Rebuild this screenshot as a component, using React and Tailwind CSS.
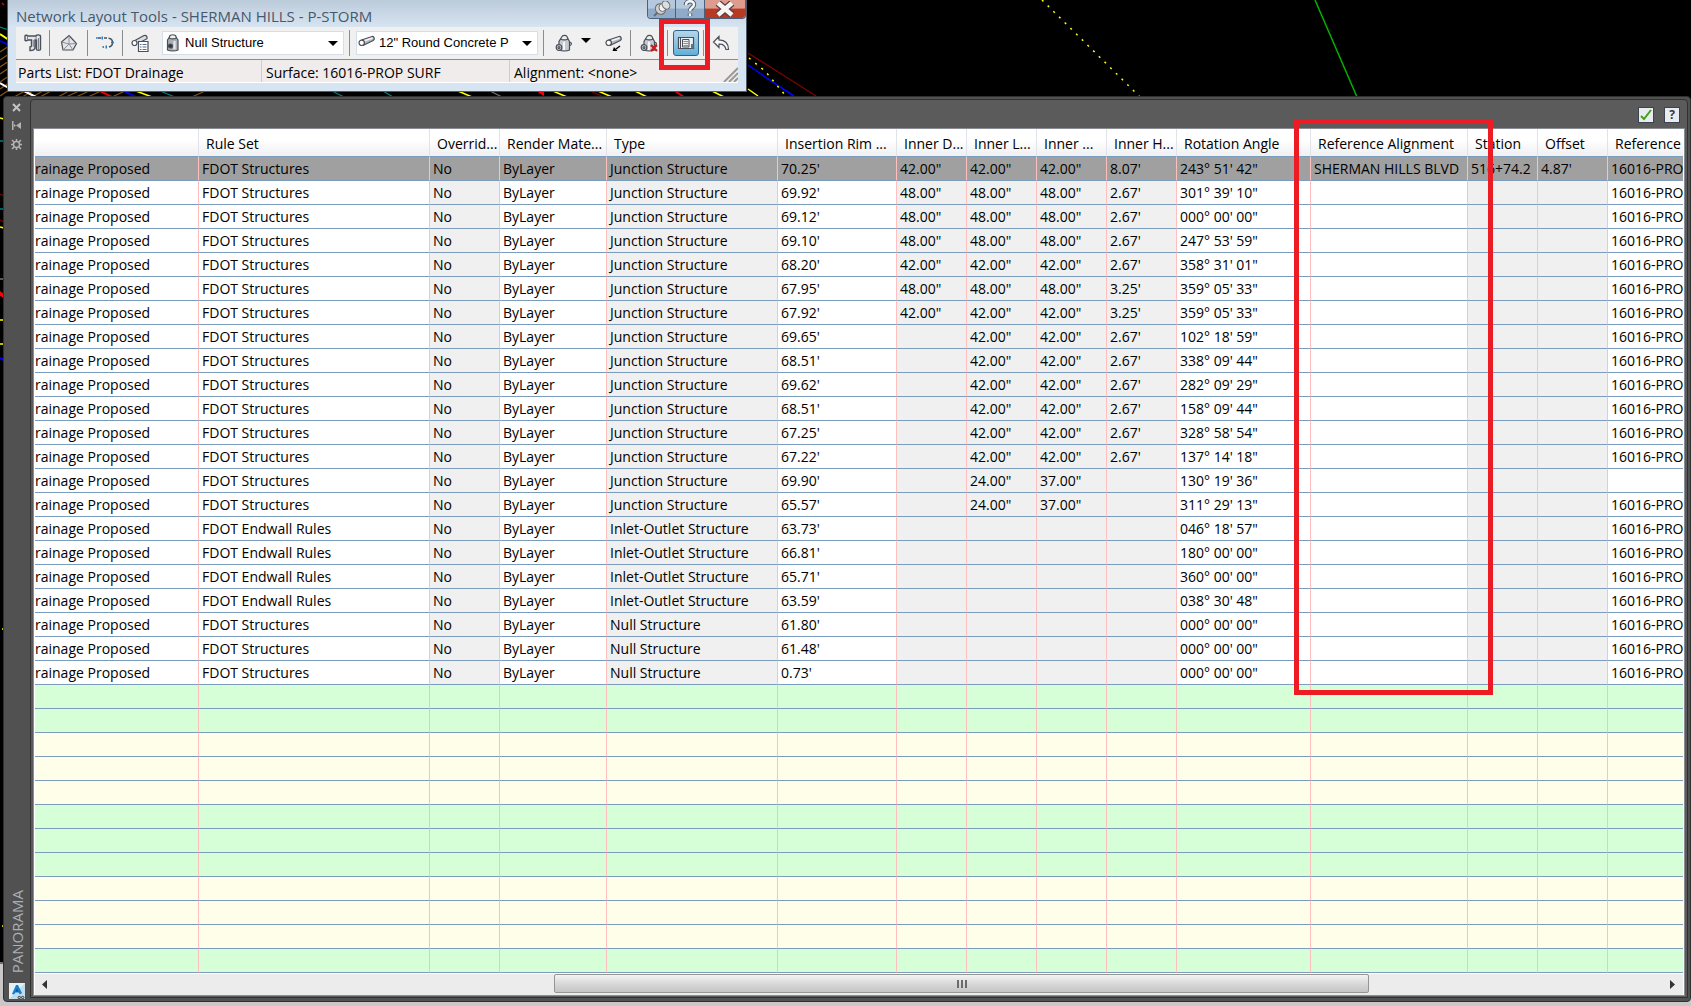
import { useState } from "react";

const columns = [
  { key: "style", title: "", width: "w-[164px]" },
  { key: "rules", title: "Rule Set", width: "w-[231px]" },
  { key: "override", title: "Overrid...", width: "w-[70px]", locked: true },
  { key: "render", title: "Render Mate...", width: "w-[107px]" },
  { key: "type", title: "Type", width: "w-[171px]", locked: true },
  { key: "rim", title: "Insertion Rim ...", width: "w-[119px]" },
  { key: "innerD", title: "Inner D...", width: "w-[70px]", locked: true },
  { key: "innerL", title: "Inner L...", width: "w-[70px]", locked: true },
  { key: "innerW", title: "Inner ...", width: "w-[70px]", locked: true },
  { key: "innerH", title: "Inner H...", width: "w-[70px]", locked: true },
  { key: "rotation", title: "Rotation Angle", width: "w-[134px]" },
  { key: "alignment", title: "Reference Alignment", width: "w-[157px]" },
  { key: "station", title: "Station", width: "w-[70px]", locked: true },
  { key: "offset", title: "Offset", width: "w-[70px]", locked: true },
  { key: "surface", title: "Reference", width: "" },
];

const F = "FDOT Structures";
const E = "FDOT Endwall Rules";
const J = "Junction Structure";
const I = "Inlet-Outlet Structure";
const N = "Null Structure";
const S = "16016-PRO";

// rule set, type, rim, inner d / l / w / h, rotation, surface
const data = [
  [F, J, "70.25'", '42.00"', '42.00"', '42.00"', "8.07'", "243° 51' 42\"", S],
  [F, J, "69.92'", '48.00"', '48.00"', '48.00"', "2.67'", "301° 39' 10\"", S],
  [F, J, "69.12'", '48.00"', '48.00"', '48.00"', "2.67'", "000° 00' 00\"", S],
  [F, J, "69.10'", '48.00"', '48.00"', '48.00"', "2.67'", "247° 53' 59\"", S],
  [F, J, "68.20'", '42.00"', '42.00"', '42.00"', "2.67'", "358° 31' 01\"", S],
  [F, J, "67.95'", '48.00"', '48.00"', '48.00"', "3.25'", "359° 05' 33\"", S],
  [F, J, "67.92'", '42.00"', '42.00"', '42.00"', "3.25'", "359° 05' 33\"", S],
  [F, J, "69.65'", "", '42.00"', '42.00"', "2.67'", "102° 18' 59\"", S],
  [F, J, "68.51'", "", '42.00"', '42.00"', "2.67'", "338° 09' 44\"", S],
  [F, J, "69.62'", "", '42.00"', '42.00"', "2.67'", "282° 09' 29\"", S],
  [F, J, "68.51'", "", '42.00"', '42.00"', "2.67'", "158° 09' 44\"", S],
  [F, J, "67.25'", "", '42.00"', '42.00"', "2.67'", "328° 58' 54\"", S],
  [F, J, "67.22'", "", '42.00"', '42.00"', "2.67'", "137° 14' 18\"", S],
  [F, J, "69.90'", "", '24.00"', '37.00"', "", "130° 19' 36\"", ""],
  [F, J, "65.57'", "", '24.00"', '37.00"', "", "311° 29' 13\"", S],
  [E, I, "63.73'", "", "", "", "", "046° 18' 57\"", S],
  [E, I, "66.81'", "", "", "", "", "180° 00' 00\"", S],
  [E, I, "65.71'", "", "", "", "", "360° 00' 00\"", S],
  [E, I, "63.59'", "", "", "", "", "038° 30' 48\"", S],
  [F, N, "61.80'", "", "", "", "", "000° 00' 00\"", S],
  [F, N, "61.48'", "", "", "", "", "000° 00' 00\"", S],
  [F, N, "0.73'", "", "", "", "", "000° 00' 00\"", S],
];

const rows = data.map(([rules, type, rim, innerD, innerL, innerW, innerH, rotation, surface], i) => ({
  style: "rainage Proposed",
  override: "No",
  render: "ByLayer",
  rules,
  type,
  rim,
  innerD,
  innerL,
  innerW,
  innerH,
  rotation,
  surface,
  alignment: i === 0 ? "SHERMAN HILLS BLVD" : "",
  station: i === 0 ? "516+74.2" : "",
  offset: i === 0 ? "4.87'" : "",
}));

const green = "bg-[#d7ffd7]";
const cream = "bg-[#ffffe9]";
const blankRows = [green, green, cream, cream, cream, green, green, green, cream, cream, cream, green];

/* ---------- icons ---------- */

function Svg({ size = 18, children }) {
  return (
    <svg width={size} height={size} viewBox="0 0 18 18" fill="none" stroke="#4a4f58" strokeWidth="1.2">
      {children}
    </svg>
  );
}

const NetworkIcon = () => (
  <Svg>
    <path d="M1 2c0-1 2.500-1 2.500 0H12c0-1.500 4.500-1.500 4.500 0v13.500c0 1-4 1-4 0V6h-1.500v7.500c0 2-1.500 3-5 3v-3.500c1.500 0 1.500-.5 1.500-1.500V6h-4c0 1-2.500 1-2.500 0z" fill="#e3e6ea" strokeWidth="1.400" />
    <path d="M3.500 2v4M12 3v3M14.500 4v11.500M9.300 6v7" stroke="#7b818b" strokeWidth="1" />
  </Svg>
);

const CatchmentIcon = () => (
  <Svg>
    <path d="M9 1.500 16.500 9.500 13 16H3L1.500 8z" fill="#e3e5e9" />
    <path d="M9 1.500V10M1.500 8 9 10l7.500-.5M3 16l6-6 4 6" stroke="#8b8f97" strokeWidth="1" />
  </Svg>
);

const ParcelIcon = () => (
  <Svg>
    <path d="M2 4h3M8 4h3M12.500 4.300c2.500.3 4 2 4 4.200S15 12.500 13 13M8 13H6.500" stroke="#4a4f58" strokeWidth="1.500" />
    <path d="M5.500 2.500H7v3H5.500zM9.500 11.500H11v3H9.500zM15 7.700h3v1.600h-3zM0 3.200h1.800v1.600H0z" fill="#1e7fd6" stroke="none" />
  </Svg>
);

const PartsListIcon = () => (
  <Svg>
    <path d="M3 7 13 1.500c2-.8 3.500 1 3 3.200L7 9.500" fill="#d9dce2" />
    <ellipse cx="3.500" cy="9" rx="2.500" ry="2.500" fill="#fff" />
    <path d="M7.500 7.500h9.500v10H7.500z" fill="#fff" />
    <path d="M9 10.500h1.500M11.500 10.500h4M9 13h1.500M11.500 13h4M9 15.500h1.500M11.500 15.500h4" stroke="#596d8c" />
  </Svg>
);

const StructureIcon = ({ children }) => (
  <Svg>
    <path d="M5.500 5 4 7.500V16c3 1.300 8 1.300 10.500 0V7.500L13 5z" fill="#c6c9cf" />
    <path d="M14.500 8.500c2.500-.5 2.500 3 0 2.800" />
    <path d="M7 2.500c1-1.500 4-1.500 5 0L13 5c-2.500 1.200-5 1.200-7.500 0z" fill="#eceef0" />
    <path d="M9 7.500v8.500" stroke="#f5f6f8" strokeWidth="2" />
    <circle cx="4" cy="13.500" r="2.800" fill="#dfe2e6" />
    <circle cx="4" cy="13.500" r="1" />
    {children}
  </Svg>
);

const NullStructureIcon = () => (
  <Svg>
    <path d="M5 4 3.500 6v10c2.500 1.300 8 1.300 10.500 0V6L12.500 4z" fill="#aaaeb6" />
    <path d="M6 1.500c1.500-.8 4-.8 5.500 0l1 2.500c-2.500 1.200-5 1.200-7.500 0z" fill="#eceef0" />
    <path d="M10.500 7v8.500" stroke="#e9ebee" strokeWidth="2" />
    <circle cx="6.500" cy="12" r="2" fill="#30343b" />
  </Svg>
);

const PipeIcon = ({ children }) => (
  <Svg>
    <path d="M3.500 6 14 2.500c2.200-.5 3.200 2.800 1.200 4L5 11.500" fill="#b4b8bf" />
    <path d="m5.500 7 9-3" stroke="#f4f5f6" strokeWidth="1.500" />
    <ellipse cx="3.700" cy="8.800" rx="2.700" ry="2.700" fill="#fff" />
    {children}
  </Svg>
);

const PanoramaIcon = () => (
  <Svg>
    <path d="M1.500 3.500h15v11h-15z" fill="#eef1f4" strokeWidth="1.200" />
    <path d="M3.500 3.500v11M5.500 5.500h6.500v7.500H5.500z" strokeWidth="1" />
    <path d="M6.500 7.500H11M6.500 9.500H11M6.500 11.500H11" stroke="#8a919b" strokeWidth="1" />
    <path d="M14 10h2.500v4.500H14z" fill="#6c737d" stroke="none" />
  </Svg>
);

const UndoIcon = () => (
  <Svg>
    <path d="M7 2.500 1.500 8 7 13.500v-3.300c4-.4 6 1 7 5.300h2.500C16.500 9.500 13 6 7 5.800z" fill="#f7f8f9" />
  </Svg>
);

const Caret = () => (
  <svg className="pointer-events-none" width="10" height="5" viewBox="0 0 10 5">
    <path d="M0 0h10L5 5z" fill="#000" />
  </svg>
);

/* ---------- drawing behind the windows ---------- */

function Drawing() {
  return (
    <svg className="absolute inset-0" width="1691" height="1006" fill="none" strokeWidth="1.300">
      <path d="M0 52 9 46M0 60l9-6M0 67l9-6M0 74l9-6M0 82l9-6M0 89l9-6M0 96l9-6M14 97l11-6M22 97l11-6M32 97l11-6M40 97l11-6M58 97l11-6M66 97l13-6M76 97l13-6M88 97l13-6M112 97l13-6M192 97l13-6" stroke="#8a5210" />
      <path d="m0 34 9 6" stroke="#ffff00" strokeWidth="2" />
      <path d="m0 27 9 3M160 91l15 6M332 91l12 6M383 91l10 6M0 141h4M0 209h4" stroke="#008080" />
      <path d="m0 41 9 4M124 91l12 6" stroke="#0000d0" strokeWidth="2" />
      <path d="m0 83 14 8M24 91l12 6" stroke="#fff" strokeWidth="2" />
      <path d="M0 118l4 1M0 227l4 1M136 91l16 6M458 91l14 6M553 91l14 6M598 91l14 6M635 91l12 6M712 91l12 6M748 89l10 7" stroke="#ffff00" strokeWidth="1.500" />
      <path d="m536 91 8 5V91z" fill="#f00" />
      <path d="m675 91 9 6M100 91l12 6" stroke="#e00000" strokeWidth="2" />
      <path d="m590 91 14 6M748 53l68 43M0 194l4 2M0 220l4 2" stroke="#800000" />
      <path d="m490 91 12 6M0 279h4" stroke="#777" />
      <path d="m748 65 20 14 26 17" stroke="#0000ff" strokeWidth="1.500" />
      <path d="m749 58 16 13 20 24M1042 0l98 97" stroke="#ffff00" strokeWidth="1.500" strokeDasharray="2 6" />
      <path d="m1315 0 42 97" stroke="#00b400" strokeWidth="1.500" />
      <path d="m0 291 4 3v4l-4-2z" fill="#f00" />
      <path d="M0 320h4M0 344h4M2 629h2M2 926h2" stroke="#ffff00" />
      <path d="m0 358 4 2" stroke="#0000ff" strokeWidth="2" />
      <path d="M2 3l2 2" stroke="#f00" />
    </svg>
  );
}

/* ---------- floating toolbar ---------- */

function ToolButton({ label, width, children }) {
  return (
    <button aria-label={label} className={`${width} flex h-full shrink-0 items-center justify-center gap-2`}>
      {children}
    </button>
  );
}

const Divider = () => <span className="h-[26px] w-px shrink-0 bg-[#8c8c8c]" />;

function PartSelect({ label, icon, options }) {
  const [value, setValue] = useState(options[0]);
  return (
    <div className="flex h-[24px] w-[182px] shrink-0 items-center border border-[#d5dfe9] bg-white pl-px pr-[5px]">
      {icon}
      <select
        aria-label={label}
        value={value}
        onChange={(e) => setValue(e.target.value)}
        className="ml-[3px] min-w-0 flex-1 appearance-none overflow-hidden bg-transparent font-['Liberation_Sans',Arial,sans-serif] text-[13px] text-black outline-none"
      >
        {options.map((o) => (
          <option key={o}>{o}</option>
        ))}
      </select>
      <Caret />
    </div>
  );
}

function LayoutTools() {
  return (
    <div className="absolute left-[7px] top-0 z-10 w-[740px] border border-t-0 border-[#4d5a68] bg-[#d7e4f2] bg-linear-to-b from-[#bccbda] to-[#d7e4f2] to-30% pb-[8px]">
      <div className="flex h-[27px] items-start justify-between pl-[8px]">
        <h1 className="pt-[6px] text-[15px] leading-[20px] text-[#46586c]">
          Network Layout Tools - SHERMAN HILLS - P-STORM
        </h1>
        <div className="flex h-[19px] overflow-hidden rounded-b-sm border border-t-0 border-[#4b6079]">
          <button aria-label="Pin" className="flex w-[28px] items-center justify-center border-r border-[#4b6079] bg-linear-to-b from-[#b5c9de] from-45% to-[#8fabc9] to-50%">
            <svg width="18" height="16" viewBox="0 0 18 16" stroke="#6b6b6b" strokeWidth="1">
              <path d="m1 15 4-4" strokeWidth="2" />
              <ellipse cx="7.500" cy="8" rx="5" ry="5.500" fill="#cfcfcf" transform="rotate(-35 7.500 8)" />
              <ellipse cx="9.500" cy="6.500" rx="3.500" ry="4" fill="#f3f3f3" />
              <ellipse cx="13" cy="4" rx="3.500" ry="4.500" fill="#dedede" transform="rotate(-35 13 4)" />
            </svg>
          </button>
          <button aria-label="Help" className="flex w-[29px] items-center justify-center border-r border-[#4b6079] bg-linear-to-b from-[#b5c9de] from-45% to-[#8fabc9] to-50%">
            <svg width="14" height="18" viewBox="0 0 14 18" fill="none">
              <path d="M3 5c0-5 8-5 8-.5C11 7.500 7 7.500 7 11M7 13.500v2.500" stroke="#4c5a6b" strokeWidth="4.500" />
              <path d="M3 5c0-5 8-5 8-.5C11 7.500 7 7.500 7 11M7 13.500v2.500" stroke="#f5f5f5" strokeWidth="2.500" />
            </svg>
          </button>
          <button aria-label="Close" className="flex w-[40px] items-center justify-center bg-linear-to-b from-[#dd9c8d] from-45% to-[#b93a22] to-50%">
            <svg width="20" height="16" viewBox="0 0 20 16">
              <path d="m3 2 14 12M17 2 3 14" stroke="#5b3c42" strokeWidth="7" />
              <path d="m3 2 14 12M17 2 3 14" stroke="#f5f5f5" strokeWidth="4.500" />
            </svg>
          </button>
        </div>
      </div>

      <div className="mx-[8px] flex h-[33px] items-center border-b border-[#8c8c8c] bg-[#f0f0f0]">
        <ToolButton label="Pipe network properties" width="w-[33px]"><NetworkIcon /></ToolButton>
        <Divider />
        <ToolButton label="Catchment" width="w-[37px]"><CatchmentIcon /></ToolButton>
        <Divider />
        <ToolButton label="Select parcels" width="w-[34px]"><ParcelIcon /></ToolButton>
        <Divider />
        <ToolButton label="Parts list" width="w-[33px]"><PartsListIcon /></ToolButton>
        <span className="w-[6px] shrink-0" />
        <PartSelect label="Structure" icon={<NullStructureIcon />} options={["Null Structure", "Junction Structure"]} />
        <span className="w-[5px] shrink-0" />
        <Divider />
        <span className="w-[6px] shrink-0" />
        <PartSelect label="Pipe" icon={<PipeIcon />} options={['12" Round Concrete P', '18" Round Concrete P']} />
        <span className="w-[5px] shrink-0" />
        <Divider />
        <span className="w-[4px] shrink-0" />
        <ToolButton label="Draw structures" width="w-[50px]">
          <StructureIcon />
          <span className="pb-[5px]"><Caret /></span>
        </ToolButton>
        <ToolButton label="Draw pipes" width="w-[32px]">
          <PipeIcon>
            <path d="m15 12-4 3" stroke="#000" strokeWidth="1.500" />
            <path d="m7.500 17 1.500-4 3.500 4z" fill="#000" stroke="none" />
          </PipeIcon>
        </ToolButton>
        <Divider />
        <ToolButton label="Delete part" width="w-[36px]">
          <StructureIcon>
            <path d="m11 11 6 6M17 11l-6 6" stroke="#d01818" strokeWidth="2.200" />
          </StructureIcon>
        </ToolButton>
        <Divider />
        <span className="w-[5px] shrink-0" />
        <button
          aria-label="Pipe network vistas"
          aria-pressed="true"
          className="flex h-[26px] w-[26px] shrink-0 items-center justify-center rounded-[3px] border border-[#2f6186] bg-linear-to-b from-[#b5d5e9] to-[#5fb0dc]"
        >
          <PanoramaIcon />
        </button>
        <span className="w-[4px] shrink-0" />
        <Divider />
        <ToolButton label="Undo" width="w-[34px]"><UndoIcon /></ToolButton>
      </div>

      <div className="relative mx-[8px] flex h-[23px] items-stretch border-b border-white bg-[#f0ecec] text-[14px] leading-[25px] text-black">
        <span className="w-[246px] border-r border-[#d0cccc] pl-[2px]">Parts List: FDOT Drainage</span>
        <span className="w-[248px] border-r border-[#d0cccc] pl-[4px]">Surface: 16016-PROP SURF</span>
        <span className="pl-[4px]">Alignment: &lt;none&gt;</span>
        <svg className="absolute bottom-0 right-0" width="15" height="15" stroke="#9a9a9a" strokeWidth="2">
          <path d="M1 15 15 1M6 15l9-9M11 15l4-4" />
        </svg>
      </div>

      <div className="pointer-events-none absolute right-[36px] top-[19px] h-[51px] w-[51px] border-5 border-[#ed1c24]" />
    </div>
  );
}

/* ---------- panorama ---------- */

function SideBar() {
  return (
    <div className="flex w-[26px] shrink-0 flex-col items-center pb-[2px] pr-px">
      <button aria-label="Close panorama" className="mt-[5px] p-px">
        <svg width="9" height="9" stroke="#c4c4c4" strokeWidth="2">
          <path d="m1 1 7 7M8 1 1 8" />
        </svg>
      </button>
      <button aria-label="Auto-hide" className="mt-[8px]">
        <svg width="9" height="9" fill="#b4b4b4">
          <path d="M0 0h1.500v9H0zM9 1v7L4 4.500zM2 3l2 1.500L2 6z" />
        </svg>
      </button>
      <button aria-label="Properties" className="mt-[9px]">
        <svg width="11" height="11" fill="none" stroke="#b4b4b4" strokeWidth="1.500">
          <circle cx="5.500" cy="5.500" r="3" />
          <path d="M5.500 0v2.500M5.500 8.500V11M0 5.500h2.500M8.500 5.500H11M1 1l2 2M8 8l2 2M10 1 8 3M3 8l-2 2" />
        </svg>
      </button>
      <span className="mt-auto rotate-180 text-[15px] leading-[18px] text-[#a9b0b6] [writing-mode:vertical-rl]">
        PANORAMA
      </span>
      <svg className="mt-[10px]" width="16" height="16" viewBox="0 0 16 16">
        <path d="M0 0h16v16H0z" fill="#c3dcec" />
        <path d="M0 0h16L0 16z" fill="#e4eff6" />
        <path d="M7 2h2l4 8-2 1.500-1.500-2H6.500L5 11.500 3 11z" fill="#1480cf" />
        <path d="m8 5.500 1.500 3h-3z" fill="#0a4f93" />
        <path d="M9 14.500c0-1.500 2.500-1.500 3 0s3 1.500 3 0-2.500-1.500-3 0-3 1.500-3 0" fill="none" stroke="#333" />
      </svg>
    </div>
  );
}

function PartsTable() {
  const [selected, setSelected] = useState(0);

  return (
    <table className="w-full table-fixed border-separate border-spacing-0 text-[14px] leading-[20px] text-black">
      <colgroup>
        {columns.map((c) => (
          <col key={c.key} className={c.width} />
        ))}
      </colgroup>
      <thead>
        <tr>
          {columns.map((c) => (
            <th
              key={c.key}
              className="h-[28px] overflow-hidden whitespace-nowrap border-b border-r border-b-[#7b9cbc] border-r-[#e0e3e7] bg-linear-to-b from-white from-40% to-[#f1f2f4] to-90% p-0 pl-[7px] pt-[3px] text-left font-normal last:border-r-0"
            >
              {c.title}
            </th>
          ))}
        </tr>
      </thead>
      <tbody>
        {rows.map((row, i) => (
          <tr key={i} onClick={() => setSelected(i)} className={i === selected ? "bg-[#a0a0a0]" : "bg-white"}>
            {columns.map((c) => (
              <td
                key={c.key}
                className={`h-[24px] overflow-hidden whitespace-nowrap border-b border-r border-b-[#7b9cbc] border-r-[#ffbfbf] p-0 pl-[3px] first:pl-0 last:border-r-0 ${
                  c.locked && i !== selected ? "bg-[#f0f0f0]" : ""
                }`}
              >
                {row[c.key]}
              </td>
            ))}
          </tr>
        ))}
        {blankRows.map((color, i) => (
          <tr key={i} className={color}>
            {columns.map((c) => (
              <td key={c.key} className="h-[24px] border-b border-r border-b-[#7b9cbc] border-r-[#ffbfbf] p-0 last:border-r-0" />
            ))}
          </tr>
        ))}
      </tbody>
    </table>
  );
}

function ScrollBar() {
  return (
    <div className="flex h-[22px] items-stretch border-t border-white bg-[#ececec] pb-px">
      <button aria-label="Scroll left" className="flex w-[19px] items-center justify-center">
        <svg width="5" height="9"><path d="M5 0v9L0 4.500z" fill="#333" /></svg>
      </button>
      <div className="flex flex-1">
        <div className="mb-px ml-[31.1%] flex w-[50.7%] items-center justify-center gap-[2px] rounded-xs border border-[#959595] bg-linear-to-b from-[#f4f4f4] via-[#d9d9da] via-50% to-[#c4c4c6]">
          <span className="h-[8px] w-[2px] bg-[#6b6b6b]" />
          <span className="h-[8px] w-[2px] bg-[#6b6b6b]" />
          <span className="h-[8px] w-[2px] bg-[#6b6b6b]" />
        </div>
      </div>
      <button aria-label="Scroll right" className="flex w-[21px] items-center justify-center">
        <svg width="5" height="9"><path d="M0 0v9l5-4.500z" fill="#333" /></svg>
      </button>
    </div>
  );
}

function Panorama() {
  return (
    <div className="relative ml-[3px] flex rounded-sm border border-[#303030] bg-[#515151]">
      <SideBar />
      <div className="mb-[3px] mr-[2px] mt-[2px] min-w-0 flex-1 rounded-t-sm border border-[#303030] bg-[#5b5b5b] px-[2px] pb-px">
        <div className="flex h-[28px] items-center justify-end gap-[10px] pr-[5px] pt-[2px]">
          <button aria-label="Apply" className="flex h-[16px] w-[16px] items-center justify-center border border-[#3c4450] bg-[#e9ecef]">
            <svg width="14" height="14" fill="none" stroke="#3fa21a" strokeWidth="2"><path d="m2 8 3 3 7-9" /></svg>
          </button>
          <button aria-label="Panorama help" className="flex h-[16px] w-[16px] items-center justify-center border border-[#3c4450] bg-[#e9ecef] text-[12px] font-bold leading-[14px] text-[#333a44]">
            ?
          </button>
        </div>
        <div className="border border-[#8a8d93] bg-white px-px">
          <PartsTable />
          <ScrollBar />
        </div>
      </div>
      <div className="pointer-events-none absolute right-[197px] top-[22px] h-[576px] w-[199px] border-5 border-[#ed1c24]" />
    </div>
  );
}

export default function App() {
  return (
    <div className="relative min-h-screen overflow-hidden bg-black font-['Open_Sans','Noto_Sans',sans-serif]">
      <Drawing />
      <div className="absolute inset-x-0 bottom-0 h-[44px] border-t-2 border-[#6e6e6e] bg-[#c9c7c8]" />
      <LayoutTools />
      <div className="pb-[4px] pt-[96px]">
        <Panorama />
      </div>
    </div>
  );
}
